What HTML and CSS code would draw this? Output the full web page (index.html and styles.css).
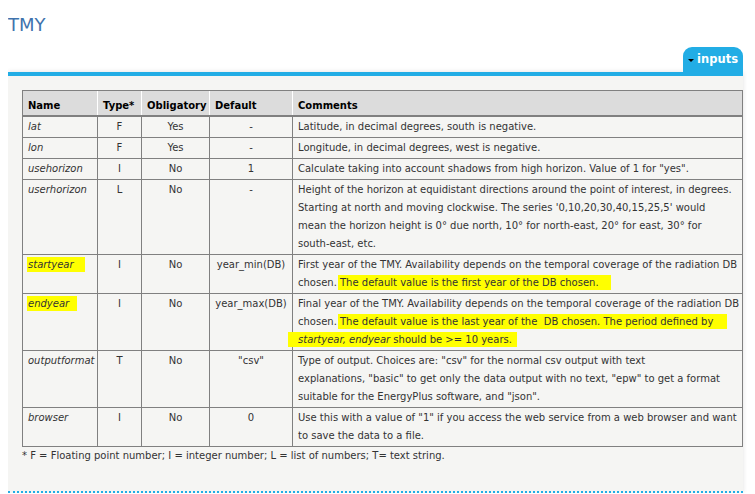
FILE: index.html
```html
<!DOCTYPE html>
<html lang="en">
<head>
<meta charset="utf-8">
<title>TMY</title>
<link rel="stylesheet" href="styles.css">
</head>
<body>
<h1 class="title">TMY</h1>
<div class="section">
  <div class="tab-row">
    <span class="tab"><span class="caret"></span>inputs</span>
  </div>
  <div class="panel">
    <table class="params">
      <colgroup>
        <col class="c-name"><col class="c-type"><col class="c-obl"><col class="c-def"><col class="c-com">
      </colgroup>
      <thead>
        <tr><th>Name</th><th>Type*</th><th>Obligatory</th><th>Default</th><th>Comments</th></tr>
      </thead>
      <tbody>
        <tr><td class="name">lat</td><td class="ctr">F</td><td class="ctr">Yes</td><td class="ctr">-</td><td class="com">Latitude, in decimal degrees, south is negative.</td></tr>
        <tr><td class="name">lon</td><td class="ctr">F</td><td class="ctr">Yes</td><td class="ctr">-</td><td class="com">Longitude, in decimal degrees, west is negative.</td></tr>
        <tr><td class="name">usehorizon</td><td class="ctr">I</td><td class="ctr">No</td><td class="ctr">1</td><td class="com">Calculate taking into account shadows from high horizon. Value of 1 for "yes".</td></tr>
        <tr><td class="name">userhorizon</td><td class="ctr">L</td><td class="ctr">No</td><td class="ctr">-</td><td class="com">Height of the horizon at equidistant directions around the point of interest, in degrees.<br>Starting at north and moving clockwise. The series '0,10,20,30,40,15,25,5' would<br>mean the horizon height is 0° due north, 10° for north-east, 20° for east, 30° for<br>south-east, etc.</td></tr>
        <tr><td class="name"><span class="mark mark-name">startyear</span></td><td class="ctr">I</td><td class="ctr">No</td><td class="ctr">year_min(DB)</td><td class="com">First year of the TMY. Availability depends on the temporal coverage of the radiation DB<br>chosen. <span class="mark mark-a">The default value is the first year of the DB chosen.</span></td></tr>
        <tr><td class="name"><span class="mark mark-name2">endyear</span></td><td class="ctr">I</td><td class="ctr">No</td><td class="ctr">year_max(DB)</td><td class="com">Final year of the TMY. Availability depends on the temporal coverage of the radiation DB<br>chosen. <span class="mark mark-b">The default value is the last year of the&nbsp; DB chosen. The period defined by</span><br><span class="mark mark-c"><i>startyear, endyear</i> should be &gt;= 10 years.</span></td></tr>
        <tr><td class="name">outputformat</td><td class="ctr">T</td><td class="ctr">No</td><td class="ctr">"csv"</td><td class="com">Type of output. Choices are: "csv" for the normal csv output with text<br>explanations, "basic" to get only the data output with no text, "epw" to get a format<br>suitable for the EnergyPlus software, and "json".</td></tr>
        <tr><td class="name">browser</td><td class="ctr">I</td><td class="ctr">No</td><td class="ctr">0</td><td class="com">Use this with a value of "1" if you access the web service from a web browser and want<br>to save the data to a file.</td></tr>
      </tbody>
    </table>
    <p class="note">* F = Floating point number; I = integer number; L = list of numbers; T= text string.</p>
  </div>
</div>
</body>
</html>
```
FILE: styles.css
```css
html, body {
  background: #ffffff;
}
body {
  margin: 8px;
  font-family: "DejaVu Sans", Verdana, sans-serif;
  color: #333333;
}
.title {
  margin: 0;
  padding-top: 6px;
  font-size: 18px;
  line-height: 22px;
  font-weight: normal;
  color: #3f73ad;
}
.section {
  margin-top: 11px;
  margin-right: 4px;
}
.tab-row {
  display: flex;
  justify-content: flex-end;
}
.tab {
  display: flex;
  align-items: center;
  gap: 3px;
  height: 25px;
  padding: 0 5px 0 5px;
  background: #22ade5;
  border-radius: 9px 9px 0 0;
  color: #ffffff;
  font-weight: bold;
  font-size: 11.5px;
  line-height: 25px;
}
.caret {
  width: 0;
  height: 0;
  border-left: 3px solid transparent;
  border-right: 3px solid transparent;
  border-top: 3px solid #000000;
  margin-top: 2px;
}
.panel {
  background: #f5f5f3;
  border-top: 4px solid #22ade5;
  border-bottom: 2px dotted #22ade5;
  box-shadow: 0 0 5px rgba(0, 0, 0, 0.12);
  padding: 14px 1px 26px 14px;
}
.params {
  width: 720px;
  border-collapse: collapse;
  table-layout: fixed;
  font-size: 10px;
  line-height: 18px;
  border: 1px solid #808080;
}
.c-name { width: 75px; }
.c-type { width: 44px; }
.c-obl { width: 68px; }
.c-def { width: 83px; }
.c-com { width: 450px; }
.params th {
  background: #dcdcdc;
  color: #000000;
  text-align: left;
  font-weight: bold;
  padding: 6px 5px 0 5px;
  border-left: 1px solid #ffffff;
  border-bottom: 2px solid #808080;
  border-top: 1px solid #808080;
}
.params th:first-child {
  border-left: 1px solid #808080;
}
.params th:last-child {
  border-right: 1px solid #808080;
}
.params td {
  padding: 1px 5px;
  border: 1px solid #808080;
  vertical-align: top;
  color: #333333;
}
.params td.name {
  font-style: italic;
}
.params td.ctr {
  text-align: center;
}
.params td.com {
  white-space: nowrap;
}
.mark {
  background: #ffff00;
}
.mark-name {
  padding: 2px 11px 2px 1px;
  margin-left: -1px;
}
.mark-name2 {
  padding: 2px 8px 2px 1px;
  margin-left: -1px;
}
.mark-a {
  padding: 2px 12px 2px 2px;
  margin-left: -2px;
}
.mark-b {
  padding: 2px 14px 2px 2px;
  margin-left: -2px;
}
.mark-c {
  padding: 2px 5px 2px 10px;
  margin-left: -10px;
}
.note {
  margin: 0;
  font-size: 10px;
  line-height: 18px;
  color: #333333;
}
```
